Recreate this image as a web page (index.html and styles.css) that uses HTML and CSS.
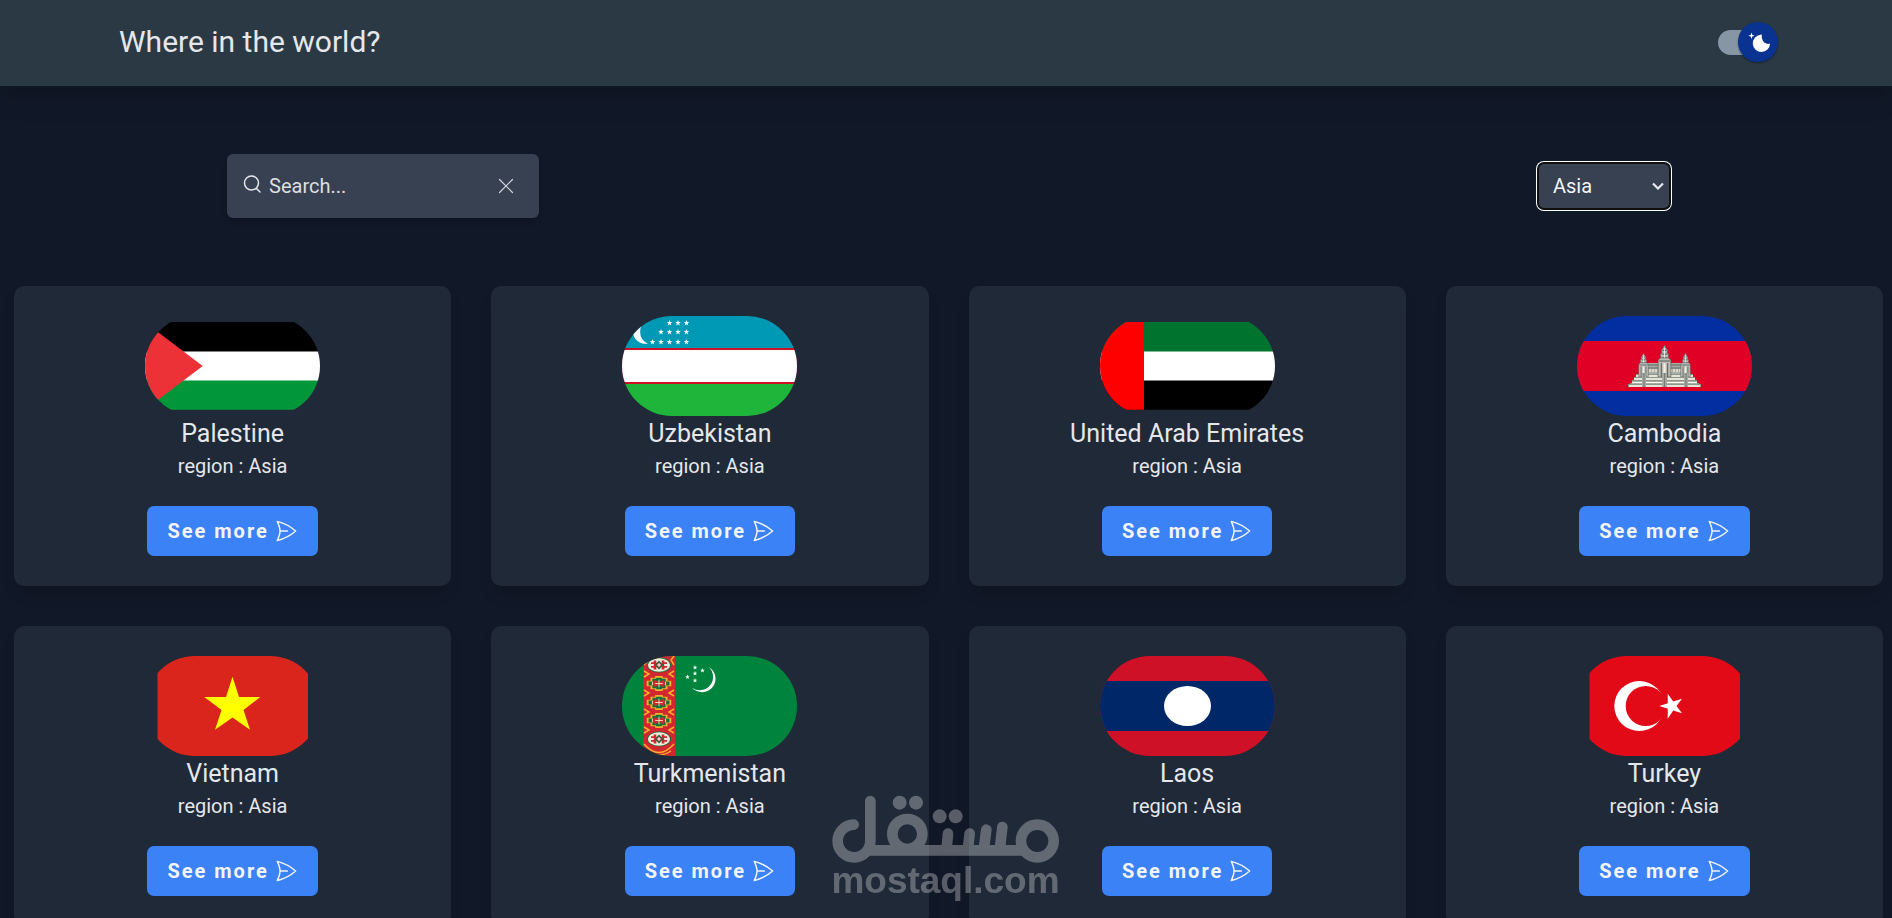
FILE: index.html
```html
<!DOCTYPE html>
<html lang="en">
<head>
<meta charset="utf-8">
<meta name="viewport" content="width=device-width, initial-scale=1">
<title>Where in the world?</title>
<link rel="stylesheet" href="styles.css">
</head>
<body>
<svg class="defs" aria-hidden="true">
  <symbol id="send" viewBox="0 0 24 24"><path d="M2.5 1.500C8 3 17 7 22.500 12C17 17 8 21 2.500 22.500C4.500 18 5.500 15 5.500 12C5.500 9 4.500 6 2.500 1.500ZM5.500 12H13.500" fill="none" stroke="currentColor" stroke-width="1.600" stroke-linejoin="round" stroke-linecap="round"/></symbol>
  <symbol id="star" viewBox="-10 -10 20 20"><path d="M0-10 2.400-3.200 9.500-3.100 3.800 1.200 5.900 8.100 0 4-5.900 8.100-3.800 1.200-9.500-3.100-2.400-3.200Z" fill="#fff"/></symbol>
  <symbol id="gul" viewBox="0 0 28 18">
    <path d="M1 6H5V3H10V1H18V3H23V6H27V12H23V15H18V17H10V15H5V12H1Z" fill="#f3b229"/>
    <path d="M3 7H7V4H11V3H17V4H21V7H25V11H21V14H17V15H11V14H7V11H3Z" fill="#12703a"/>
    <path d="M6 9 10 5 14 8 18 5 22 9 18 13 14 10 10 13Z" fill="#d22630"/>
    <path d="M10 9H18M14 5V13M7 7V11M21 7V11" stroke="#f5dfb0" stroke-width="1"/>
  </symbol>
  <symbol id="gul-light" viewBox="0 0 28 18">
    <ellipse cx="14" cy="9" rx="13.500" ry="8.500" fill="#16713b"/>
    <ellipse cx="14" cy="9" rx="12.500" ry="7.500" fill="#f4ead8"/>
    <path d="M5 6H8V4H11V7H17V4H20V6H23V8H20V10H23V12H20V14H17V11H11V14H8V12H5V10H8V8H5Z" fill="#d22630"/>
    <path d="M9 9 14 4 19 9 14 14Z" fill="#16713b"/>
    <path d="M11 9 14 6 17 9 14 12Z" fill="#d22630"/>
    <path d="M12 9H16M14 7V11M6 9H8M20 9H22" stroke="#fff" stroke-width="1.200"/>
  </symbol>
  <symbol id="tower" viewBox="0 0 14 30">
    <path d="M7 0 8.500 3 10 5 9.500 7 11 9 10.500 12 13 14V30H1V14L3.500 12 3 9 4.500 7 4 5 5.500 3Z" fill="#b9bdb4" stroke="#555" stroke-width=".6"/>
    <path d="M5 5H9M4 8.500H10M4 12H10M2 15H12M4 17V30M10 17V30" stroke="#555" stroke-width=".9"/>
    <path d="M6 17H8V30H6Z" fill="#f3efe2"/>
    <path d="M7 3V12" stroke="#eee" stroke-width=".8"/>
  </symbol>
</svg>

<header class="topbar">
  <h1 class="topbar__title">Where in the world?</h1>
  <label class="theme-switch">
    <input class="theme-switch__input" type="checkbox" role="switch" aria-label="Dark mode" checked>
    <span class="theme-switch__thumb">
      <svg viewBox="0 0 40 40" aria-hidden="true">
        <path d="M22.500 12.800A8.600 8.600 0 1 0 32 21.500C29 23 23 20.500 23.800 12.500Z" fill="#fff"/>
        <path d="M13.500 10.500 14.300 12.900 16.700 13.700 14.300 14.500 13.500 16.900 12.700 14.500 10.300 13.700 12.700 12.900Z" fill="#fff"/>
      </svg>
    </span>
  </label>
</header>

<main>
  <form class="filters">
    <div class="search">
      <svg class="search__icon" viewBox="0 0 20 20" aria-hidden="true"><g fill="none" stroke="currentColor" stroke-width="1.500" stroke-linecap="round"><circle cx="8.500" cy="9" r="7"/><path d="m13.500 14.500 3.500 3.500"/></g></svg>
      <input class="search__input" type="text" placeholder="Search..." aria-label="Search">
      <button class="search__clear" type="button" aria-label="Clear"><svg viewBox="0 0 16 16" aria-hidden="true"><path d="m1.500 1.500 13 13m0-13-13 13" stroke="currentColor" stroke-width="1.200" stroke-linecap="round"/></svg></button>
    </div>
    <div class="region">
      <select class="region__select" aria-label="Region"><option>Asia</option><option>Africa</option><option>Europe</option></select>
      <svg class="region__arrow" viewBox="0 0 12 8" aria-hidden="true"><path d="m1 1.500 5 5 5-5" fill="none" stroke="currentColor" stroke-width="2.200"/></svg>
    </div>
  </form>

  <section class="countries">
    <article class="card">
      <svg class="card__flag" viewBox="0 0 175 100" role="img" aria-label="Flag of Palestine"><path fill="#000" d="M0 6H175V36H0Z"/><path fill="#fff" d="M0 35.500H175V65H0Z"/><path fill="#009639" d="M0 64.500H175V93.700H0Z"/><path fill="#ed3237" d="M0 6.200 57.700 50 0 93.700Z"/></svg>
      <h2 class="card__name">Palestine</h2><p class="card__region">region : Asia</p>
      <button class="card__button" type="button">See more <svg class="card__send"><use href="#send"/></svg></button>
    </article>
    <article class="card">
      <svg class="card__flag" viewBox="0 0 175 100" role="img" aria-label="Flag of Uzbekistan"><path fill="#0099b5" d="M0 0H175V33H0Z"/><path fill="#ce1126" d="M0 32H175V68H0Z"/><path fill="#fff" d="M0 34H175V66H0Z"/><path fill="#1eb53a" d="M0 68H175V100H0Z"/><path fill="#fff" d="M26 27.500A12.500 12 0 1 1 26 4A12.700 12.700 0 0 0 26 27.500Z"/>
        <g><use href="#star" x="44.500" y="4" width="6" height="6"/><use href="#star" x="53" y="4" width="6" height="6"/><use href="#star" x="61.500" y="4" width="6" height="6"/><use href="#star" x="36" y="13" width="6" height="6"/><use href="#star" x="44.500" y="13" width="6" height="6"/><use href="#star" x="53" y="13" width="6" height="6"/><use href="#star" x="61.500" y="13" width="6" height="6"/><use href="#star" x="27.500" y="23" width="6" height="6"/><use href="#star" x="36" y="23" width="6" height="6"/><use href="#star" x="44.500" y="23" width="6" height="6"/><use href="#star" x="53" y="23" width="6" height="6"/><use href="#star" x="61.500" y="23" width="6" height="6"/></g></svg>
      <h2 class="card__name">Uzbekistan</h2><p class="card__region">region : Asia</p>
      <button class="card__button" type="button">See more <svg class="card__send"><use href="#send"/></svg></button>
    </article>
    <article class="card">
      <svg class="card__flag" viewBox="0 0 175 100" role="img" aria-label="Flag of the United Arab Emirates"><path fill="#00732f" d="M0 6H175V36H0Z"/><path fill="#fff" d="M0 35.500H175V65H0Z"/><path fill="#000" d="M0 64.500H175V93.700H0Z"/><path fill="#f00" d="M0 6H44V93.700H0Z"/></svg>
      <h2 class="card__name">United Arab Emirates</h2><p class="card__region">region : Asia</p>
      <button class="card__button" type="button">See more <svg class="card__send"><use href="#send"/></svg></button>
    </article>
    <article class="card">
      <svg class="card__flag" viewBox="0 0 175 100" role="img" aria-label="Flag of Cambodia"><path fill="#032ea1" d="M0 0H175V100H0Z"/><path fill="#e00025" d="M0 25H175V75H0Z"/>
        <path d="M63 47H112V60H63Z" fill="#a9afa6"/><path d="M64 49H111M64 52H111" stroke="#4d5450" stroke-width=".8"/><path d="M66 54.500H109" stroke="#ddd8c8" stroke-width="3" stroke-dasharray="2 1"/>
        <path d="M59 58H116V61H118V64H120V67H122V68H124V71H51V68H53V67H55V64H57V61H59Z" fill="#8d958c"/>
        <path d="M59 60H116M57 63H118M55 66.500H120M52 70H123" stroke="#fffdf0" stroke-width="1.500"/>
        <use href="#tower" x="60" y="37" width="13" height="24"/><use href="#tower" x="102" y="37" width="13" height="24"/><use href="#tower" x="80" y="29" width="15" height="32"/>
        <path d="M65 57H69V71H65ZM85 57H90V71H85ZM107 57H111V71H107Z" fill="#a4aaa2"/><path d="M67 57V71M87.500 57V71M109 57V71" stroke="#666" stroke-width=".7"/></svg>
      <h2 class="card__name">Cambodia</h2><p class="card__region">region : Asia</p>
      <button class="card__button" type="button">See more <svg class="card__send"><use href="#send"/></svg></button>
    </article>
    <article class="card">
      <svg class="card__flag" viewBox="0 0 175 100" role="img" aria-label="Flag of Vietnam"><path fill="#da251d" d="M12.500 0H163V100H12.500Z"/><path fill="#ff0" d="M87.500 20.700 94 41 115.300 41 98.500 54 105 73.700 87.500 61.500 70 73.700 76.500 54 59.300 41 81 41Z"/></svg>
      <h2 class="card__name">Vietnam</h2><p class="card__region">region : Asia</p>
      <button class="card__button" type="button">See more <svg class="card__send"><use href="#send"/></svg></button>
    </article>
    <article class="card">
      <svg class="card__flag" viewBox="0 0 175 100" role="img" aria-label="Flag of Turkmenistan"><path fill="#00843d" d="M0 0H175V100H0Z"/><path fill="#d22630" d="M21 0H53V100H21Z"/><path d="M22 0 25 3V6L22 9M22 15 27 18 22 21M22 34 27 37 22 40M22 53 27 56 22 59M22 71 27 74 22 77M52 0 49 4 52 9M52 15 47 18 52 21M52 34 47 37 52 40M52 53 47 56 52 59M52 71 47 74 52 77M22 88Q37 105 52 88M25 95Q37 103 49 95" fill="none" stroke="#f3b229" stroke-width="1.500"/>
        <use href="#gul-light" x="23" y="1" width="28" height="16"/><use href="#gul" x="23" y="19" width="28" height="17"/><use href="#gul" x="23" y="38" width="28" height="17"/><use href="#gul" x="23" y="56" width="28" height="17"/><use href="#gul-light" x="24" y="75" width="26" height="16"/>
        <path fill="#fff" d="M86.300 10.700A13.500 13.500 0 1 1 70 31.700A13.300 13.300 0 0 0 86.300 10.700Z"/><use href="#star" x="70.500" y="9" width="5" height="5"/><use href="#star" x="78" y="12" width="5" height="5"/><use href="#star" x="70.500" y="15" width="5" height="5"/><use href="#star" x="63" y="18.500" width="5" height="5"/><use href="#star" x="70.500" y="22" width="5" height="5"/></svg>
      <h2 class="card__name">Turkmenistan</h2><p class="card__region">region : Asia</p>
      <button class="card__button" type="button">See more <svg class="card__send"><use href="#send"/></svg></button>
    </article>
    <article class="card">
      <svg class="card__flag" viewBox="0 0 175 100" role="img" aria-label="Flag of Laos"><path fill="#ce1126" d="M0 0H175V100H0Z"/><path fill="#002868" d="M0 25H175V75H0Z"/><ellipse cx="87.500" cy="50" rx="23.500" ry="20" fill="#fff"/></svg>
      <h2 class="card__name">Laos</h2><p class="card__region">region : Asia</p>
      <button class="card__button" type="button">See more <svg class="card__send"><use href="#send"/></svg></button>
    </article>
    <article class="card">
      <svg class="card__flag" viewBox="0 0 175 100" role="img" aria-label="Flag of Turkey"><path fill="#e30a17" d="M12.500 0H163V100H12.500Z"/><circle cx="62.300" cy="50" r="25" fill="#fff"/><circle cx="68.700" cy="50" r="20" fill="#e30a17"/><path fill="#fff" d="M82.300 50 90.800 47.200 90.700 37.700 96.200 45.400 105 42.700 99.500 50 105 57.300 96.200 54.600 90.700 62.700 90.800 52.800Z"/></svg>
      <h2 class="card__name">Turkey</h2><p class="card__region">region : Asia</p>
      <button class="card__button" type="button">See more <svg class="card__send"><use href="#send"/></svg></button>
    </article>
  </section>
</main>

<div class="watermark">
  <svg class="watermark__mark" viewBox="96 463 681 204" role="img" aria-label="مستقل">
    <g fill="none" stroke="#fff" stroke-width="32" stroke-linecap="round">
      <path d="M161 552A49 49 0 1 0 211 601V481"/><path d="M205 629H680" stroke-linecap="butt"/>
      <circle cx="322" cy="580" r="45"/><circle cx="712" cy="601" r="49"/>
      <path d="M444 579 440 622M509 579 504 622M559 567 552 622M607 559 600 622"/>
    </g>
    <g fill="#fff"><circle cx="299" cy="486" r="21"/><circle cx="348" cy="486" r="21"/><circle cx="419" cy="527" r="21"/><circle cx="467" cy="527" r="21"/></g>
  </svg>
  <span class="watermark__text">mostaql.com</span>
</div>
</body>
</html>
```
FILE: styles.css
```css
*, *::before, *::after { box-sizing: border-box; }

html { font-size: 20px; scrollbar-width: none; }

body {
  margin: 0;
  background: #111827;
  color: #e5e7eb;
  font-family: Roboto, "Noto Sans", sans-serif;
  line-height: 30px;
}

h1, h2, p { margin: 0; font-weight: 400; }

button, input, select { font: inherit; color: inherit; }

.defs { position: absolute; width: 0; height: 0; }

.topbar {
  display: flex;
  align-items: center;
  justify-content: space-between;
  padding: 21px 114px 23px 119px;
  background: #2b3945;
  box-shadow: 0 20px 25px -5px rgb(0 0 0 / 10%), 0 8px 10px -6px rgb(0 0 0 / 10%);
}

.topbar__title { font-size: 30px; line-height: 40px; }

.theme-switch {
  position: relative;
  display: flex;
  align-items: center;
  width: 60px;
  height: 42px;
}

.theme-switch__input {
  appearance: none;
  width: 50px;
  height: 25px;
  margin: 0;
  border-radius: 13px;
  background: #8796a5;
}

.theme-switch__thumb {
  position: absolute;
  top: 1px;
  right: 0;
  width: 40px;
  height: 40px;
  border-radius: 50%;
  background: #0a3391;
  box-shadow: 0 1px 2px rgb(0 0 0 / 40%);
}

.theme-switch__thumb svg { display: block; }

.filters {
  display: flex;
  align-items: center;
  justify-content: space-between;
  padding: 68px 223px 68px 12%;
}

.search {
  display: flex;
  align-items: center;
  width: 312px;
  height: 64px;
  padding: 0 25px 0 16px;
  border-radius: 6px;
  background: #374151;
  box-shadow: 0 4px 6px -1px rgb(0 0 0 / 20%);
}

.search__icon { flex: none; width: 20px; height: 20px; margin-bottom: 4px; }

.search__input {
  flex: 1;
  min-width: 0;
  padding: 0 6px;
  border: 0;
  outline: 0;
  background: none;
}

.search__input::placeholder { color: #dcdfe0; opacity: 1; }

.search__clear {
  display: flex;
  padding: 0;
  border: 0;
  background: none;
  color: #d1d5db;
}

.search__clear svg { width: 16px; height: 16px; }

.region { position: relative; }

.region__select {
  appearance: none;
  display: block;
  width: 130px;
  height: 44px;
  padding: 0 14px;
  border: 0;
  border-radius: 5px;
  outline: 0;
  background: #374151;
  color: #f3f4f6;
  box-shadow: 0 0 0 2px #101010, 0 0 0 3px #fff;
}

.region__arrow {
  position: absolute;
  top: 18px;
  right: 5px;
  width: 12px;
  height: 8px;
  pointer-events: none;
}

.countries {
  display: grid;
  grid-template-columns: repeat(4, 1fr);
  gap: 40px;
  padding: 0 9px 40px 14px;
}

.card {
  display: flex;
  flex-direction: column;
  align-items: center;
  padding: 30px;
  border-radius: 10px;
  background: #1f2937;
  box-shadow: 0 10px 15px -3px rgb(0 0 0 / 15%);
}

.card__flag {
  width: 175px;
  height: 100px;
  border-radius: 50px;
  overflow: hidden;
}

.card__name { font-size: 25px; line-height: 35px; }

.card__button {
  display: flex;
  align-items: center;
  gap: 6px;
  height: 50px;
  margin-top: 25px;
  padding: 0 21px 0 20px;
  border: 0;
  border-radius: 7px;
  background: #3b82f6;
  color: #f3f4f6;
  font-weight: 700;
  letter-spacing: 2px;
}

.card__send { width: 22px; height: 22px; }

.watermark {
  position: fixed;
  top: 795px;
  left: 50%;
  display: flex;
  flex-direction: column;
  align-items: center;
  width: 227px;
  margin-left: -114px;
  opacity: .3;
  color: #fff;
  pointer-events: none;
}

.watermark__mark { width: 227px; height: 68px; }

.watermark__text {
  font-family: "Liberation Sans", Arial, sans-serif;
  font-size: 37px;
  font-weight: 700;
  line-height: 36px;
}
```
